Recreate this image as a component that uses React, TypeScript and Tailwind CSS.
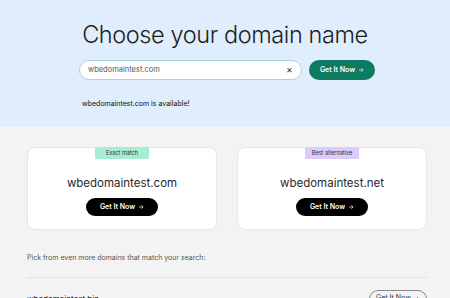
import React from 'react';

const Arrow: React.FC<{ className?: string }> = ({ className }) => (
  <svg viewBox="0 0 10 10" className={className} fill="none" stroke="currentColor" strokeWidth="1.1">
    <path d="M1.5 5h7M5.5 2l3 3-3 3" />
  </svg>
);

const DomainCard: React.FC<{ badge: string; badgeColor: string; domain: string }> = ({ badge, badgeColor, domain }) => (
  <div className="relative h-[83px] rounded-[8px] bg-white border border-[#e6e6e6] flex flex-col items-center">
    <span className={`absolute -top-px left-1/2 -translate-x-1/2 ${badgeColor} h-[12px] w-[54px] flex items-center justify-center text-[5.5px] text-[#333]`}>
      {badge}
    </span>
    <p className="mt-[27px] text-[11.5px] leading-[16px] text-[#2a2a2a]">{domain}</p>
    <button className="mt-[7px] h-[18px] w-[72px] rounded-full bg-black text-white text-[7px] font-semibold flex items-center justify-center gap-[3px]">
      Get It Now <Arrow className="w-[6px] h-[6px]" />
    </button>
  </div>
);

export default function App() {
  return (
    <div className="w-[450px] h-[298px] overflow-hidden bg-[#f3f3f3]" style={{ fontFamily: 'Inter, "Noto Sans", sans-serif' }}>
      {/* search header */}
      <section className="h-[127px] bg-[#e0edfd] flex flex-col items-center">
        <h1 className="mt-[20px] text-[23.5px] leading-[30px] font-light text-[#1e1e1e] tracking-[-0.4px]">Choose your domain name</h1>
        <div className="mt-[10px] flex items-center gap-[7px] pl-[4px]">
          <div className="w-[223px] h-[20px] rounded-full bg-white border border-[#a9d4d9] flex items-center px-[8px]">
            <span className="flex-1 text-[7.5px] text-[#555]">wbedomaintest.com</span>
            <span className="text-[8px] text-[#333] leading-none">✕</span>
          </div>
          <button className="w-[66px] h-[20px] rounded-full bg-[#0d7a62] text-white text-[7px] font-semibold flex items-center justify-center gap-[3px]">
            Get It Now <Arrow className="w-[6px] h-[6px]" />
          </button>
        </div>
        <p className="mt-[19px] w-[296px] pl-[5px] text-[7px] text-[#111]">wbedomaintest.com is available!</p>
      </section>

      {/* results */}
      <section className="pl-[27px] pr-[23px] pt-[20px]">
        <div className="grid grid-cols-2 gap-[20px]">
          <DomainCard badge="Exact match" badgeColor="bg-[#a8ecd4]" domain="wbedomaintest.com" />
          <DomainCard badge="Best alternative" badgeColor="bg-[#dccbfc]" domain="wbedomaintest.net" />
        </div>
        <p className="mt-[23px] text-[7px] text-[#555]">Pick from even more domains that match your search:</p>
        <div className="mt-[13px] border-t border-[#e2e2e2]" />
        <div className="mt-[12px] flex items-center justify-between">
          <span className="text-[8px] text-[#222]">wbedomaintest.biz</span>
          <button className="w-[58px] h-[18px] rounded-full border border-[#888] text-[7px] text-[#333] flex items-center justify-center gap-[3px]">
            Get It Now <Arrow className="w-[6px] h-[6px]" />
          </button>
        </div>
      </section>
    </div>
  );
}
